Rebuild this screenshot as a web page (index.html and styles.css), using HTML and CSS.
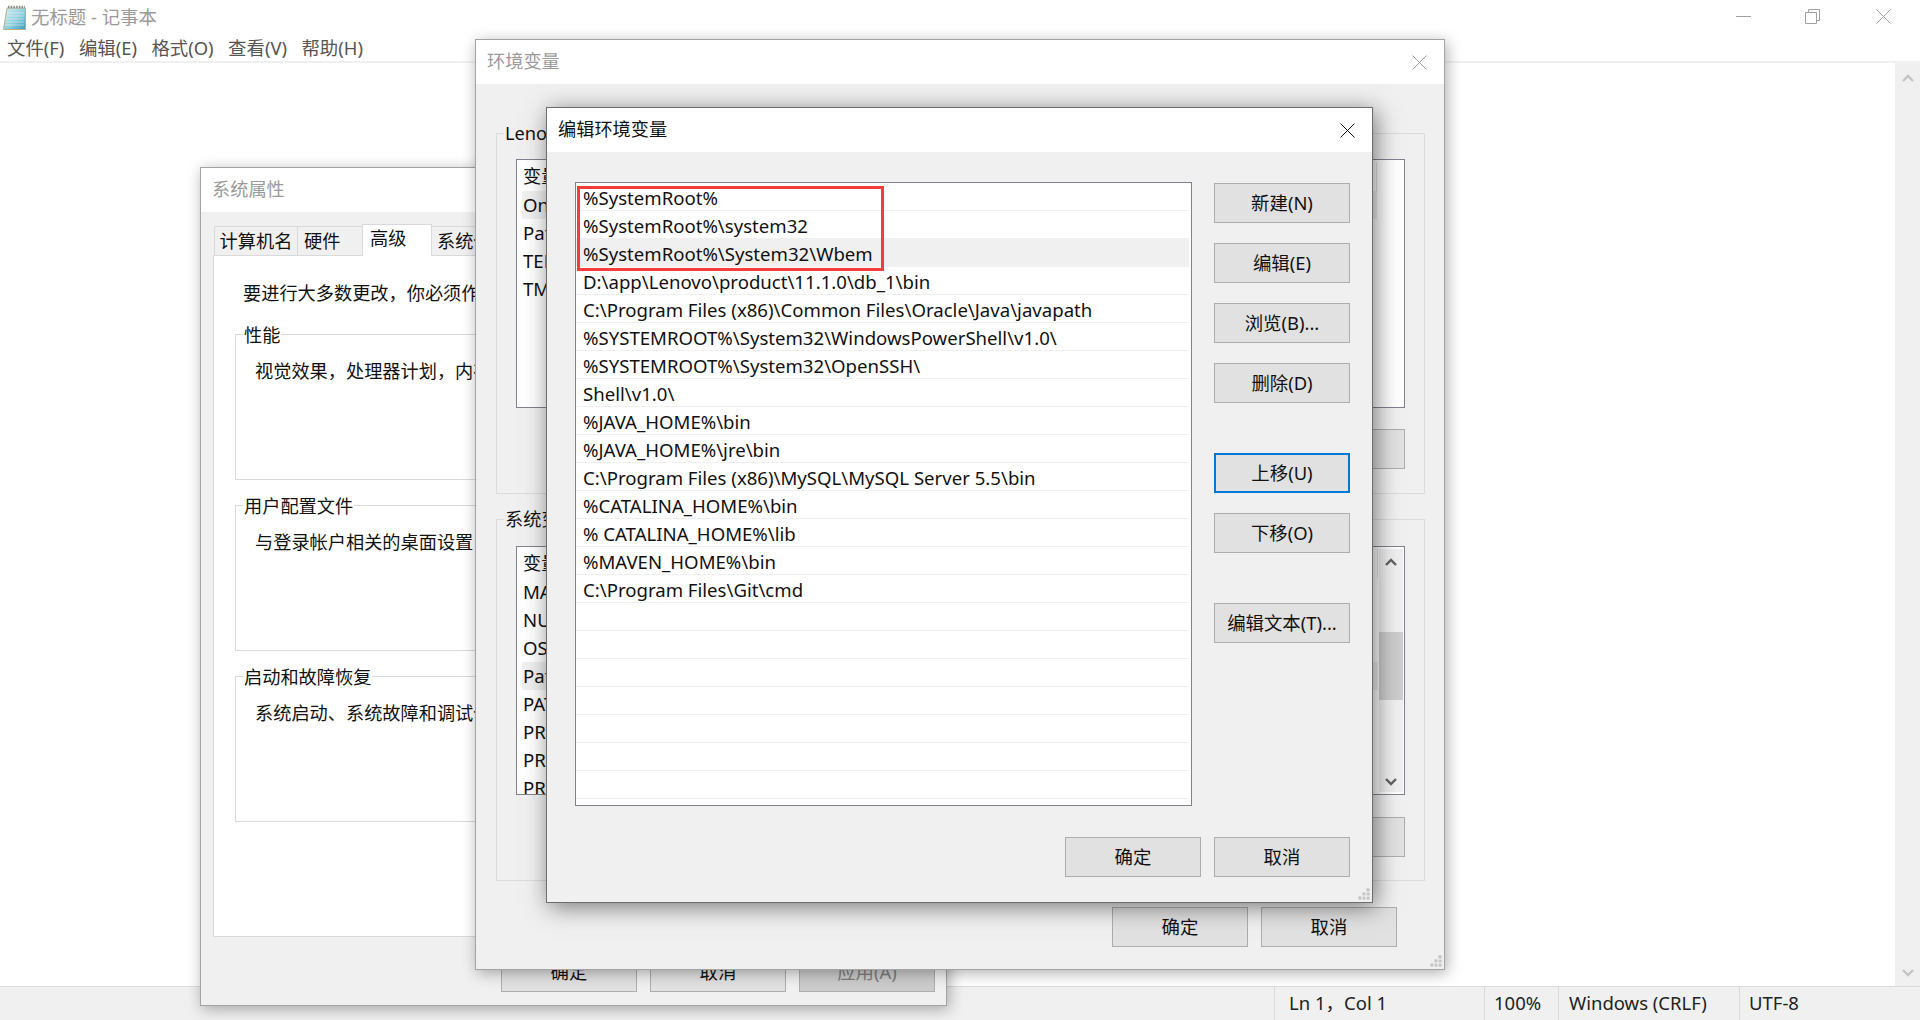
FILE: index.html
```html
<!DOCTYPE html>
<html lang="zh">
<head>
<meta charset="utf-8">
<title>无标题 - 记事本</title>
<link rel="stylesheet" href="styles.css">
</head>
<body>
<div class="notepad">
  <header class="np-title">
    <svg class="np-icon" viewBox="0 0 26 26" width="26" height="26">
      <defs><linearGradient id="pad" x1="0" y1="0" x2="1" y2="1"><stop offset="0" stop-color="#d8eef2"/><stop offset="0.55" stop-color="#8fcfdc"/><stop offset="1" stop-color="#3f9db8"/></linearGradient></defs>
      <path d="M5 4H23.500V25.500H1.500Z" fill="url(#pad)" stroke="#b9ac8c" stroke-width="1"/>
      <path d="M5 9H22M4.400 12H22M4 15H22M3.500 18H22M3 21H22" stroke="#ffffff" stroke-opacity=".45" stroke-width="1" fill="none"/>
      <path d="M6 3H23" stroke="#8a8a8a" stroke-width="2.400" stroke-dasharray="1.500 1.200" fill="none"/>
    </svg>
    <span class="np-name">无标题 - 记事本</span>
    <div class="np-caption">
      <svg class="cap" viewBox="0 0 15 15"><path d="M0 7.500H15" stroke="#a0a0a0" fill="none"/></svg>
      <svg class="cap cap-restore" viewBox="0 0 15 15"><path d="M.5 3.500H11.500V14.500H.5ZM3.500 3.500V.5H14.500V11.500H11.500" stroke="#a0a0a0" fill="none"/></svg>
      <svg class="cap" viewBox="0 0 15 15"><path d="M.5.5L14.500 14.500M14.500.5L.5 14.500" stroke="#a0a0a0" fill="none"/></svg>
    </div>
  </header>
  <nav class="np-menu">
    <span>文件(F)</span><span>编辑(E)</span><span>格式(O)</span><span>查看(V)</span><span>帮助(H)</span>
  </nav>
  <main class="np-main">
    <div class="np-text"></div>
    <div class="np-scroll">
      <svg class="chev" viewBox="0 0 14 10"><path d="M2 8L7 3L12 8" stroke="#c4c4c4" stroke-width="2.400" fill="none"/></svg>
      <svg class="chev" viewBox="0 0 14 10"><path d="M2 2L7 7L12 2" stroke="#c4c4c4" stroke-width="2.400" fill="none"/></svg>
    </div>
  </main>
  <footer class="np-status">
    <div class="st st-blank"></div>
    <div class="st st-pos">Ln 1，Col 1</div>
    <div class="st st-zoom">100%</div>
    <div class="st st-eol">Windows (CRLF)</div>
    <div class="st st-enc">UTF-8</div>
  </footer>
</div>

<section class="window win-sys">
  <div class="win-title inactive">系统属性</div>
  <div class="sys-body">
    <div class="tabs">
      <div class="tab tab-a">计算机名</div>
      <div class="tab tab-b">硬件</div>
      <div class="tab tab-on">高级</div>
      <div class="tab tab-d">系统保护</div>
    </div>
    <div class="tab-panel">
      <p class="admin-note">要进行大多数更改，你必须作为管理员登录。</p>
      <fieldset class="sys-group">
        <legend>性能</legend>
        <p>视觉效果，处理器计划，内存使用，以及虚拟内存</p>
      </fieldset>
      <fieldset class="sys-group">
        <legend>用户配置文件</legend>
        <p>与登录帐户相关的桌面设置</p>
      </fieldset>
      <fieldset class="sys-group">
        <legend>启动和故障恢复</legend>
        <p>系统启动、系统故障和调试信息</p>
      </fieldset>
    </div>
    <div class="btn-row sys-actions">
      <button class="btn">确定</button>
      <button class="btn">取消</button>
      <button class="btn btn-off">应用(A)</button>
    </div>
  </div>
</section>

<section class="window win-env">
  <div class="win-title inactive">环境变量
    <svg class="x" viewBox="0 0 15 15"><path d="M.5.5L14.500 14.500M14.500.5L.5 14.500" stroke="#a0a0a0" fill="none"/></svg>
  </div>
  <div class="env-body">
    <fieldset class="env-group env-user">
      <legend>Lenovo 的用户变量(U)</legend>
      <div class="var-list list-user">
        <div class="var-head">变量</div>
        <div class="var-row var-on">OneDrive</div>
        <div class="var-row">Path</div>
        <div class="var-row">TEMP</div>
        <div class="var-row">TMP</div>
      </div>
      <div class="btn-row env-actions">
        <button class="btn">新建(N)...</button>
        <button class="btn">编辑(E)...</button>
        <button class="btn">删除(D)</button>
      </div>
    </fieldset>
    <fieldset class="env-group env-system">
      <legend>系统变量(S)</legend>
      <div class="var-list list-sys">
        <div class="var-cols">
          <div class="var-head">变量</div>
          <div class="var-row">MAVEN_HOME</div>
          <div class="var-row">NUMBER_OF_PROCESSORS</div>
          <div class="var-row">OS</div>
          <div class="var-row var-on">Path</div>
          <div class="var-row">PATHEXT</div>
          <div class="var-row">PROCESSOR_ARCHITECTURE</div>
          <div class="var-row">PROCESSOR_IDENTIFIER</div>
          <div class="var-row">PROCESSOR_LEVEL</div>
        </div>
        <div class="list-scroll">
          <svg class="chev" viewBox="0 0 14 10"><path d="M2 8L7 3L12 8" stroke="#606060" stroke-width="2.400" fill="none"/></svg>
          <div class="thumb"></div>
          <svg class="chev" viewBox="0 0 14 10"><path d="M2 2L7 7L12 2" stroke="#606060" stroke-width="2.400" fill="none"/></svg>
        </div>
      </div>
      <div class="btn-row env-actions">
        <button class="btn">新建(W)...</button>
        <button class="btn">编辑(I)...</button>
        <button class="btn">删除(L)</button>
      </div>
    </fieldset>
    <div class="btn-row env-ok">
      <button class="btn">确定</button>
      <button class="btn">取消</button>
    </div>
  </div>
  <svg class="grip" viewBox="0 0 12 12"><path d="M8 0h4v4H8zM4 4h4v4H4zM8 4h4v4H8zM0 8h4v4H0zM4 8h4v4H4zM8 8h4v4H8z" fill="#c4c4c4" stroke="#f0f0f0" stroke-width=".8"/></svg>
</section>

<section class="window win-edit">
  <div class="win-title">编辑环境变量
    <svg class="x" viewBox="0 0 15 15"><path d="M.5.5L14.500 14.500M14.500.5L.5 14.500" stroke="#111" fill="none"/></svg>
  </div>
  <div class="edit-body">
    <div class="edit-main">
      <div class="path-list">
        <div class="path-row">%SystemRoot%</div>
        <div class="path-row">%SystemRoot%\system32</div>
        <div class="path-row path-on">%SystemRoot%\System32\Wbem</div>
        <div class="path-row">D:\app\Lenovo\product\11.1.0\db_1\bin</div>
        <div class="path-row">C:\Program Files (x86)\Common Files\Oracle\Java\javapath</div>
        <div class="path-row">%SYSTEMROOT%\System32\WindowsPowerShell\v1.0\</div>
        <div class="path-row">%SYSTEMROOT%\System32\OpenSSH\</div>
        <div class="path-row">Shell\v1.0\</div>
        <div class="path-row">%JAVA_HOME%\bin</div>
        <div class="path-row">%JAVA_HOME%\jre\bin</div>
        <div class="path-row">C:\Program Files (x86)\MySQL\MySQL Server 5.5\bin</div>
        <div class="path-row">%CATALINA_HOME%\bin</div>
        <div class="path-row">% CATALINA_HOME%\lib</div>
        <div class="path-row">%MAVEN_HOME%\bin</div>
        <div class="path-row">C:\Program Files\Git\cmd</div>
        <div class="path-row"></div><div class="path-row"></div><div class="path-row"></div>
        <div class="path-row"></div><div class="path-row"></div><div class="path-row"></div>
        <div class="path-row"></div>
        <div class="red-box"></div>
      </div>
      <div class="side-btns">
        <div class="side-set">
          <button class="btn">新建(N)</button>
          <button class="btn">编辑(E)</button>
          <button class="btn">浏览(B)...</button>
          <button class="btn">删除(D)</button>
        </div>
        <div class="side-set">
          <button class="btn btn-focus">上移(U)</button>
          <button class="btn">下移(O)</button>
        </div>
        <button class="btn">编辑文本(T)...</button>
      </div>
    </div>
    <div class="btn-row edit-ok">
      <button class="btn">确定</button>
      <button class="btn">取消</button>
    </div>
  </div>
  <svg class="grip" viewBox="0 0 12 12"><path d="M8 0h4v4H8zM4 4h4v4H4zM8 4h4v4H8zM0 8h4v4H0zM4 8h4v4H4zM8 8h4v4H8z" fill="#c4c4c4" stroke="#f0f0f0" stroke-width=".8"/></svg>
</section>
</body>
</html>
```

FILE: styles.css
```css
* { box-sizing: border-box; }
html, body { margin: 0; height: 100%; overflow: hidden; }
body {
  position: relative;
  background: #fff;
  color: #111;
  font: 18.200px/1.2 "Noto Sans", "Noto Sans CJK SC", sans-serif;
}
p { margin: 0; }

/* Notepad behind the dialogs */
.notepad { display: flex; flex-direction: column; height: 1020px; }
.np-title { display: flex; align-items: center; height: 32px; flex: none; padding: 2px 0 0 2px; }
.np-icon { flex: none; }
.np-name { margin-left: 3px; color: #9a9a9a; font-size: 18.400px; }
.np-caption { display: flex; margin-left: auto; gap: 54px; padding: 0 29px 0 0; }
.cap { width: 15px; height: 15px; margin-top: -2px; }
.cap-restore { margin-right: 2px; }
.np-menu {
  display: flex; gap: 14.500px; align-items: center; flex: none;
  height: 31px; padding: 3px 0 0 7px;
  border-bottom: 2px solid #f0f0f0;
  color: #555; font-size: 18.400px;
}
.np-main { flex: 1; display: flex; min-height: 0; }
.np-text { flex: 1; }
.np-scroll {
  width: 25px; background: #f0f0f0; display: flex; flex-direction: column;
  justify-content: space-between; align-items: center; padding: 10px 0 8px;
}
.np-scroll .chev { width: 14px; height: 10px; }
.np-status {
  display: flex; flex: none; height: 34px; background: #f0f0f0;
  border-top: 1px solid #dcdcdc; font-size: 18.500px; color: #222;
}
.st { display: flex; align-items: center; border-right: 1px solid #dadada; padding-left: 9px; }
.st-blank { width: 1275px; }
.st-pos { width: 210px; padding-left: 14px; }
.st-zoom { width: 74px; }
.st-eol { width: 181px; padding-left: 10px; }
.st-enc { flex: 1; border-right: 0; }

/* Dialog windows placed on the desktop */
.window {
  position: absolute; z-index: 0; display: flex; flex-direction: column;
  background: #f0f0f0; border: 1px solid #a3a3a3;
  box-shadow: 2px 3px 14px rgba(0,0,0,.32);
}
.win-sys { left: 200px; top: 167px; width: 747px; height: 839px; }
.win-env { left: 475px; top: 39px; width: 970px; height: 931px; }
.win-edit { left: 546px; top: 107px; width: 827px; height: 796px; border-color: #6d6d6d; box-shadow: 3px 4px 22px rgba(0,0,0,.5); }
.win-title {
  display: flex; align-items: center; justify-content: space-between;
  flex: none; height: 44px; padding: 0 17px 0 11px; background: #fff; font-size: 18.200px;
}
.inactive { color: #9a9a9a; }
.x { width: 15px; height: 15px; flex: none; }
.grip { position: absolute; right: 2px; bottom: 2px; width: 12px; height: 12px; }

.btn {
  display: block; width: 136px; height: 40px; padding: 1px 0 0;
  background: #e1e1e1; border: 1.500px solid #adadad; border-radius: 0;
  color: #111; font: inherit; font-size: 18.400px;
}
.btn-off { background: #cccccc; color: #7d7d7d; }
.btn-focus { border: 2px solid #0078d7; }
.btn-row { display: flex; justify-content: flex-end; gap: 13px; }

/* System properties */
.sys-body { flex: 1; display: flex; flex-direction: column; padding: 12px 11px 13px 12px; }
.tabs { display: flex; align-items: flex-end; height: 32px; padding-left: 1px; position: relative; z-index: 1; margin-bottom: -1px; }
.tab {
  height: 30px; padding-top: 4px; text-align: center;
  border: 1px solid #d9d9d9; border-bottom: 1px solid #d9d9d9; border-right: 0;
  background: #f0f0f0;
}
.tab-a { width: 83px; }
.tab-b { width: 65px; text-align: left; padding-left: 6px; }
.tab-on { width: 70px; height: 32px; background: #fff; border-right: 1px solid #d9d9d9; border-bottom: 0; padding: 3px 0 0 7px; text-align: left; }
.tab-d { width: 90px; text-align: left; padding-left: 5px; border-left: 0; }
.tab-panel { height: 682px; background: #fff; border: 1px solid #d9d9d9; padding: 27px 12px 0 21px; }
.admin-note { height: 26px; margin-left: 8px; }
.sys-group {
  height: 157px; margin: 14px 0 0; padding: 0 0 0 19px;
  border: 1px solid #d9d9d9;
}
.sys-group legend { padding: 1px 1px 0; margin-left: -12px; line-height: 22px; height: 22px; }
.sys-group p { margin-top: 16px; }
.sys-actions { margin-top: auto; }

/* Environment variables */
.env-body { flex: 1; display: flex; flex-direction: column; padding: 38px 19px 0 20px; }
.env-group { margin: 0; padding: 0 19px; border: 1px solid #dcdcdc; min-width: 0; }
.env-group legend { padding: 0 1px; margin-left: -12px; height: 22px; line-height: 22px; }
.env-user { height: 372px; }
.env-system { height: 373px; margin-top: 14px; }
.var-list { border: 1px solid #82828c; background: #fff; overflow: hidden; }
.list-user { height: 249px; margin-top: 15px; padding: 2px 27px 0 5px; }
.list-sys { height: 249px; margin-top: 16px; display: flex; padding: 2px 1px 0 5px; }
.var-cols { flex: 1; min-width: 0; }
.var-head { height: 29px; padding-left: 1px; display: flex; align-items: center; border-right: 1px solid #e3e3e3; }
.var-row { height: 28px; padding-left: 1px; display: flex; align-items: center; white-space: nowrap; font-size: 18.600px; }
.var-on { background: #f0f0f0; }
.list-scroll {
  width: 24px; flex: none; margin-left: 1px; margin-bottom: 2px; background: #f0f0f0;
  display: flex; flex-direction: column; align-items: center; padding: 8px 0 5px;
}
.list-scroll .chev { width: 14px; height: 10px; flex: none; }
.thumb { width: 24px; height: 68px; background: #cdcdcd; margin: 65px 0 auto; }
.env-actions { margin-top: 21px; }
.env-system .env-actions { margin-top: 22px; }
.env-ok { margin-top: 26px; padding-right: 28px; }

/* Edit environment variable */
.edit-body { flex: 1; display: flex; flex-direction: column; padding: 30px 22px 0 28px; }
.edit-main { display: flex; justify-content: space-between; height: 624px; }
.path-list {
  position: relative; width: 617px; height: 624px; overflow: hidden;
  background: #fff; border: 1px solid #82828c; padding-right: 2px;
}
.path-row {
  height: 28px; padding: 3px 0 0 7px; display: flex; align-items: center;
  border-bottom: 1px solid #f0f0f0; white-space: nowrap; font-size: 18.600px;
}
.path-on { background: #f0f0f0; }
.red-box { position: absolute; left: 1px; top: 3px; width: 307px; height: 85px; border: 3px solid #f43c3c; }
.side-btns { display: flex; flex-direction: column; width: 136px; gap: 50px; margin-top: 1px; }
.side-set { display: flex; flex-direction: column; gap: 20px; }
.edit-ok { margin-top: 31px; }
```
